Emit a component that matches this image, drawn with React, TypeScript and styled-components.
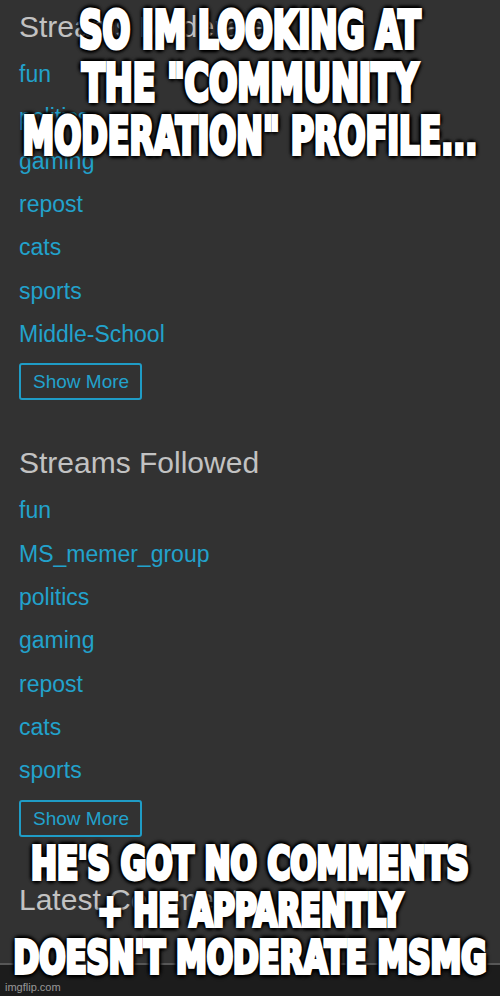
import { useLayoutEffect, useRef, useState } from 'react';
import styled, { createGlobalStyle } from 'styled-components';

const GlobalStyle = createGlobalStyle`
  html, body { margin: 0; padding: 0; background: #323232; }
  body { font-family: "Liberation Sans", Arial, sans-serif; }
`;

const Page = styled.div`
  position: relative;
  width: 500px;
  height: 996px;
  overflow: hidden;
  background: #323232;
  display: flex;
  flex-direction: column;
`;

const Sidebar = styled.div`
  padding: 10px 19px 0;
  display: flex;
  flex-direction: column;
`;

const Section = styled.section`
  display: flex;
  flex-direction: column;
  align-items: flex-start;
  margin-bottom: 46px;
`;

const SectionTitle = styled.h2`
  margin: 0 0 9px;
  font-size: 30px;
  line-height: 34px;
  font-weight: normal;
  color: #c2c2c2;
  white-space: nowrap;
`;

const StreamLink = styled.a`
  display: block;
  font-size: 23px;
  line-height: 43.33px;
  color: #22a2cc;
  text-decoration: none;
  white-space: nowrap;
`;

const ShowMore = styled.button`
  margin-top: 7px;
  height: 37px;
  width: 123px;
  padding: 0 0 0 12px;
  text-align: left;
  background: transparent;
  border: 2px solid #1f9cc6;
  border-radius: 3px;
  color: #22a2cc;
  font-family: "Liberation Sans", Arial, sans-serif;
  font-size: 19px;
  line-height: 33px;
`;

const Footer = styled.div`
  margin-top: auto;
  height: 31px;
  border-top: 2px solid #575757;
  background: #1c1c1c;
`;

/* meme caption: heavy condensed white type with a dark glow, laid over the screenshot */
const Caption = styled.div<{ $top: number; $size: number; $pitch: number }>`
  position: absolute;
  left: 0;
  right: 0;
  top: ${({ $top }) => $top}px;
  font-family: "DejaVu Sans", "Liberation Sans", sans-serif;
  font-weight: bold;
  font-stretch: condensed;
  font-size: ${({ $size }) => $size}px;
  line-height: ${({ $pitch }) => $pitch}px;
  color: #fff;
  -webkit-text-stroke: 4px #fff;
  text-shadow:
    0 0 3px #000, 0 0 5px #000,
    2px 2px 4px #000, -2px -2px 4px #000,
    2px -2px 4px #000, -2px 2px 4px #000,
    4px 0 4px #000, -4px 0 4px #000,
    0 4px 4px #000, 0 -4px 4px #000;
`;

const CaptionRow = styled.div`
  display: flex;
  justify-content: center;
  white-space: nowrap;
`;

const CaptionText = styled.span`
  display: inline-block;
  transform-origin: center;
`;

const Watermark = styled.div`
  position: absolute;
  left: 5px;
  bottom: 3px;
  font-family: "Liberation Sans", Arial, sans-serif;
  font-size: 11px;
  color: rgba(255, 255, 255, 0.55);
`;

function FitLine({ text, width }: { text: string; width: number }) {
  const ref = useRef<HTMLSpanElement>(null);
  const [scale, setScale] = useState(1);
  useLayoutEffect(() => {
    if (ref.current) setScale(width / ref.current.offsetWidth);
  }, [text, width]);
  return (
    <CaptionRow>
      <CaptionText ref={ref} style={{ transform: `scaleX(${scale})` }}>{text}</CaptionText>
    </CaptionRow>
  );
}

const MODERATED = ['fun', 'politics', 'gaming', 'repost', 'cats', 'sports', 'Middle-School'];
const FOLLOWED = ['fun', 'MS_memer_group', 'politics', 'gaming', 'repost', 'cats', 'sports'];

export default function App() {
  return (
    <Page>
      <GlobalStyle />
      <Sidebar>
        <Section>
          <SectionTitle>Streams Moderated</SectionTitle>
          {MODERATED.map(s => <StreamLink key={s} href="#">{s}</StreamLink>)}
          <ShowMore>Show More</ShowMore>
        </Section>
        <Section>
          <SectionTitle>Streams Followed</SectionTitle>
          {FOLLOWED.map(s => <StreamLink key={s} href="#">{s}</StreamLink>)}
          <ShowMore>Show More</ShowMore>
        </Section>
        <SectionTitle>Latest Comments</SectionTitle>
      </Sidebar>
      <Footer />

      <Caption $top={4} $size={51} $pitch={53}>
        <FitLine text="SO IM LOOKING AT" width={342} />
        <FitLine text={'THE "COMMUNITY'} width={336} />
        <FitLine text={'MODERATION" PROFILE...'} width={455} />
      </Caption>
      <Caption $top={840} $size={45} $pitch={47}>
        <FitLine text="HE'S GOT NO COMMENTS" width={438} />
        <FitLine text="+ HE APPARENTLY" width={305} />
        <FitLine text="DOESN'T MODERATE MSMG" width={473} />
      </Caption>
      <Watermark>imgflip.com</Watermark>
    </Page>
  );
}
